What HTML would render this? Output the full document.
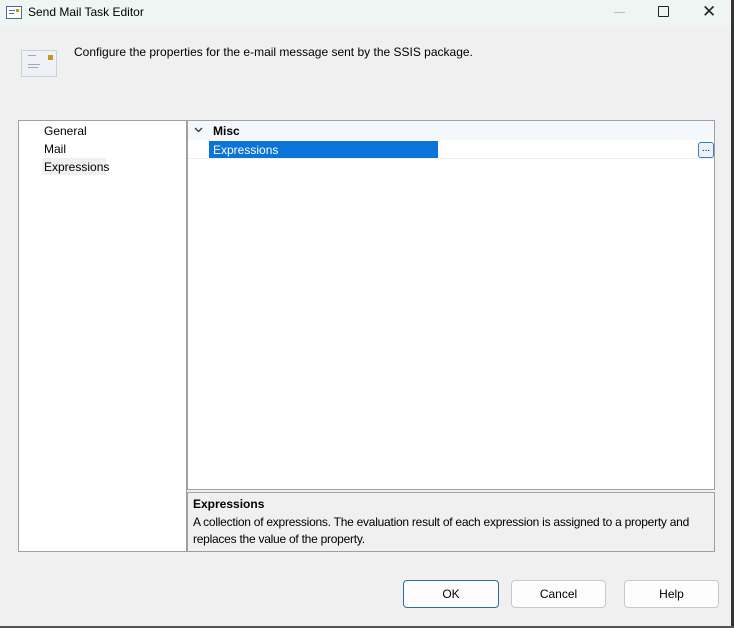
<!DOCTYPE html>
<html><head><style>
body{margin:0;width:734px;height:628px;overflow:hidden;background:#f0f0f0;font-family:"Segoe UI","Liberation Sans",sans-serif;font-size:12px;color:#000;position:relative}
.a{position:absolute}
.title{left:0;top:0;width:731px;height:27px;background:#eef5f2}
.btn{position:absolute;top:580px;height:26px;border:1px solid #c8c8c8;border-radius:4px;background:#fdfdfd;text-align:center;line-height:26px;font-size:12px}
</style></head><body>
<div class="a title"></div>
<svg class="a" style="left:6px;top:6px" width="16" height="14"><rect x="0.5" y="0.5" width="15" height="12" fill="#fff" stroke="#4a6a8a"/><rect x="3" y="4" width="6" height="1" fill="#4a6a8a"/><rect x="3" y="7" width="5" height="1" fill="#4a6a8a"/><rect x="10" y="3" width="3" height="3" fill="#c8961e"/></svg>
<div class="a" style="left:28px;top:5px;font-size:12px">Send Mail Task Editor</div>
<div class="a" style="left:614px;top:12px;width:11px;height:1px;background:#bbb"></div>
<div class="a" style="left:658px;top:6px;width:9px;height:9px;border:1px solid #222;border-radius:1px"></div>
<div class="a" style="left:702px;top:3px;font-size:17px;line-height:18px;color:#222">✕</div>
<div class="a" style="left:731px;top:0;width:3px;height:628px;background:#333"></div>
<div class="a" style="left:0;top:626px;width:734px;height:2px;background:#555"></div>
<svg class="a" style="left:21px;top:50px" width="36" height="27"><rect x="0.5" y="0.5" width="35" height="26" fill="#eef2f7" stroke="#c8d0da"/><rect x="27" y="5" width="5" height="5" fill="#c8961e"/><rect x="7" y="5" width="8" height="1" fill="#9ab"/><rect x="7" y="14" width="12" height="1" fill="#9ab"/><rect x="7" y="17" width="10" height="1" fill="#9ab"/></svg>
<div class="a" style="left:74px;top:45px">Configure the properties for the e-mail message sent by the SSIS package.</div>
<div class="a" style="left:18px;top:120px;width:167px;height:430px;background:#fff;border:1px solid #a0a0a0"></div>
<div class="a" style="left:44px;top:124px">General</div>
<div class="a" style="left:44px;top:142px">Mail</div>
<div class="a" style="left:42px;top:158px;width:64px;height:17px;background:#f0f0f0"></div>
<div class="a" style="left:44px;top:160px">Expressions</div>
<div class="a" style="left:187px;top:120px;width:526px;height:368px;background:#fff;border:1px solid #a0a0a0"></div>
<div class="a" style="left:188px;top:121px;width:526px;height:19px;background:#f4f7fb"></div>
<svg class="a" style="left:194px;top:127px" width="9" height="6"><path d="M1 1 L4.5 4.5 L8 1" fill="none" stroke="#333" stroke-width="1.3"/></svg>
<div class="a" style="left:213px;top:124px;font-weight:bold">Misc</div>
<div class="a" style="left:209px;top:141px;width:229px;height:17px;background:#0a74d8;color:#fff;line-height:18px;padding-left:4px;box-sizing:border-box">Expressions</div>
<div class="a" style="left:188px;top:158px;width:526px;height:1px;background:#f0f0f0"></div>
<div class="a" style="left:698px;top:142px;width:14px;height:14px;border:1px solid #3a7bc8;border-radius:3px;font-size:10px;line-height:12px;text-align:center;background:#eaf2fb">...</div>
<div class="a" style="left:187px;top:492px;width:526px;height:58px;background:#f0f0f0;border:1px solid #a0a0a0"></div>
<div class="a" style="left:193px;top:497px;font-weight:bold">Expressions</div>
<div class="a" style="left:193px;top:514px;line-height:17px;width:520px;letter-spacing:-0.25px">A collection of expressions. The evaluation result of each expression is assigned to a property and replaces the value of the property.</div>
<div class="btn" style="left:403px;width:94px;border-color:#2b6ca8">OK</div>
<div class="btn" style="left:511px;width:93px">Cancel</div>
<div class="btn" style="left:624px;width:93px">Help</div>
</body></html>
